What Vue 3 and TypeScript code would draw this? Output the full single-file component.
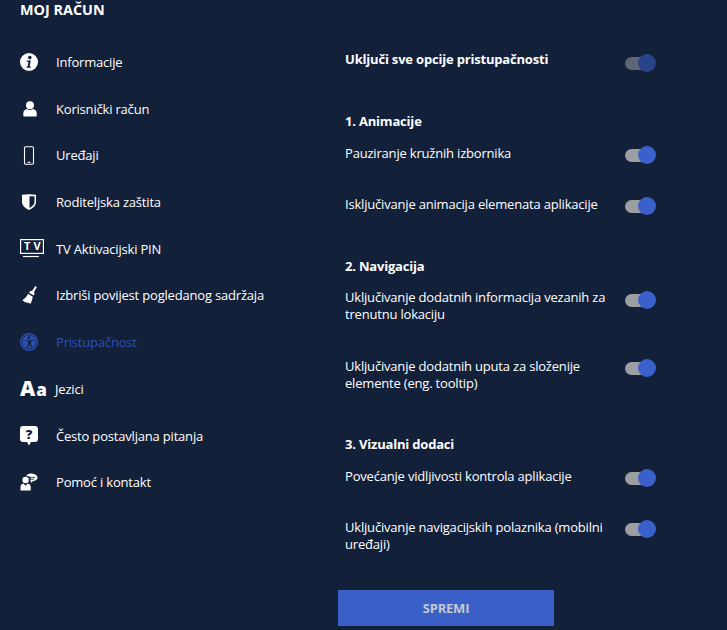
<script setup lang="ts">
interface MenuItem { label: string; icon: string; active?: boolean }
const menu: MenuItem[] = [
  { label: 'Informacije', icon: 'info' },
  { label: 'Korisnički račun', icon: 'user' },
  { label: 'Uređaji', icon: 'phone' },
  { label: 'Roditeljska zaštita', icon: 'shield' },
  { label: 'TV Aktivacijski PIN', icon: 'tv' },
  { label: 'Izbriši povijest pogledanog sadržaja', icon: 'broom' },
  { label: 'Pristupačnost', icon: 'access', active: true },
  { label: 'Jezici', icon: 'lang' },
  { label: 'Često postavljana pitanja', icon: 'faq' },
  { label: 'Pomoć i kontakt', icon: 'help' },
]
interface Section { title: string; items: string[] }
const sections: Section[] = [
  { title: '1. Animacije', items: ['Pauziranje kružnih izbornika', 'Isključivanje animacija elemenata aplikacije'] },
  { title: '2. Navigacija', items: ['Uključivanje dodatnih informacija vezanih za trenutnu lokaciju', 'Uključivanje dodatnih uputa za složenije elemente (eng. tooltip)'] },
  { title: '3. Vizualni dodaci', items: ['Povećanje vidljivosti kontrola aplikacije', 'Uključivanje navigacijskih polaznika (mobilni uređaji)'] },
]
</script>

<template>
  <div class="page">
    <h1 class="title">MOJ RAČUN</h1>
    <div class="columns">
      <nav class="menu">
        <div v-for="m in menu" :key="m.label" class="menu-item" :class="{ active: m.active }">
          <span class="icon">
            <svg v-if="m.icon === 'info'" width="18" height="18" viewBox="0 0 18 18">
              <circle cx="9" cy="9" r="9" fill="#fff" />
              <circle cx="9.800" cy="4.600" r="1.800" fill="#12203a" />
              <path d="M6.800 7.500h4l-1.200 6h1.200v1.200H6.600v-1.200h1l.9-4.800H6.800z" fill="#12203a" />
            </svg>
            <svg v-else-if="m.icon === 'user'" class="ml3" width="14" height="16" viewBox="0 0 14 16">
              <circle cx="7" cy="4.200" r="4" fill="#fff" />
              <path d="M1.300 15.500c-.7 0-1-.4-1-1v-2.300c0-2.500 2-3.700 3.600-4.200 1 .8 2 1.100 3.100 1.100s2.100-.3 3.100-1.100c1.600.5 3.600 1.700 3.600 4.200v2.300c0 .6-.3 1-1 1z" fill="#fff" />
            </svg>
            <svg v-else-if="m.icon === 'phone'" class="ml3" width="12" height="19" viewBox="0 0 12 19">
              <rect x="1.500" y=".7" width="9" height="17.600" rx="1.200" fill="none" stroke="#fff" stroke-width="1.100" />
              <path d="M4.500 16.300h3" stroke="#fff" stroke-width="1.100" />
            </svg>
            <svg v-else-if="m.icon === 'shield'" class="ml2" width="14" height="16" viewBox="0 0 14 16">
              <path d="M0 .8C4 0 10 0 14 .8V8c0 3.500-3 6.200-7 8C3 14.200 0 11.500 0 8z" fill="#fff" />
              <path d="M7.500 2.200h5v5.900c0 2.600-2.300 4.400-5 5.900z" fill="#12203a" />
            </svg>
            <svg v-else-if="m.icon === 'tv'" width="24" height="19" viewBox="0 0 24 19">
              <rect x=".6" y=".6" width="22.800" height="13.800" fill="none" stroke="#fff" stroke-width="1.200" />
              <text x="7" y="11.300" class="tv-text" text-anchor="middle">T</text>
              <text x="17" y="11.300" class="tv-text" text-anchor="middle">V</text>
              <path d="M3 17.500h16" stroke="#fff" stroke-width="1.200" />
            </svg>
            <svg v-else-if="m.icon === 'broom'" class="ml2" width="15" height="18" viewBox="0 0 15 18">
              <path d="M13.400 0l1.400 1-3 5.400 1 .9-1.100 2.300-4.700-2.800 1.500-2 1.500.3z" fill="#fff" />
              <path d="M6 7.800l4.800 3c-.4 2.500-1.100 4.700-2 6.700H7.300l-.8-.9-1 .5-1.700-1-.4.4-3-2.300C3 12.500 5.300 10 6 7.800z" fill="#fff" />
            </svg>
            <svg v-else-if="m.icon === 'access'" width="18" height="18" viewBox="0 0 18 18">
              <circle cx="9" cy="9" r="9" fill="#2c4fb4" />
              <circle cx="9" cy="9" r="7.200" fill="none" stroke="#12203a" stroke-width=".8" />
              <circle cx="9" cy="4.800" r="1.400" fill="#12203a" />
              <path d="M4.500 6.700l3 .7h3l3-.7.3 1-2.900.8v2.300l1.100 3.600-1 .3-1.300-3.500h-.4l-1.300 3.500-1-.3 1.100-3.600V8.500l-2.900-.8z" fill="#12203a" />
            </svg>
            <span v-else-if="m.icon === 'lang'" class="lang"><b class="big">A</b><b class="small">a</b></span>
            <svg v-else-if="m.icon === 'faq'" width="18" height="20" viewBox="0 0 18 20">
              <path d="M3 0h12a3 3 0 0 1 3 3v10a3 3 0 0 1-3 3h-4l-2 3.500L7 16H3a3 3 0 0 1-3-3V3a3 3 0 0 1 3-3z" fill="#fff" />
              <text x="9" y="13" class="faq-text" text-anchor="middle">?</text>
            </svg>
            <svg v-else width="18" height="18" viewBox="0 0 18 18">
              <path d="M10.500.5c3.800 0 7 1.600 7 4 0 2-2 3.400-4.600 3.800l-2.200 1.700.4-1.600h-.8c.5-1 .6-3.300-.7-4.600C9 3 7.700 2.700 6 3c1-1.500 2.600-2.500 4.500-2.500z" fill="#fff" />
              <circle cx="5.600" cy="7" r="3.200" fill="#fff" />
              <path d="M.5 17.500v-3.600c0-1.900 1.200-3 3-3.300l2.100 2.200 2.100-2.200c1.800.3 3 1.400 3 3.300v3.600z" fill="#fff" />
              <path d="M9 4.400h6M10 6.200h4" stroke="#12203a" stroke-width=".8" />
            </svg>
          </span>
          <span class="label" :class="{ shift: m.icon === 'lang' }">{{ m.label }}</span>
        </div>
      </nav>

      <main class="options">
        <div class="opt master">
          <span class="opt-text strong">Uključi sve opcije pristupačnosti</span>
          <span class="toggle dim"><i></i></span>
        </div>
        <section v-for="s in sections" :key="s.title" class="section">
          <h2 class="section-title">{{ s.title }}</h2>
          <div v-for="o in s.items" :key="o" class="opt">
            <span class="opt-text">{{ o }}</span>
            <span class="toggle"><i></i></span>
          </div>
        </section>
        <button class="save" type="button">SPREMI</button>
      </main>
    </div>
  </div>
</template>

<style>
html, body { margin: 0; background: #12203a; }
</style>

<style scoped>
.page {
  width: 727px;
  height: 630px;
  overflow: hidden;
  background: #12203a;
  color: #fff;
  font-family: "Open Sans", "Noto Sans", sans-serif;
  box-sizing: border-box;
  padding: 0 20px;
}
.title {
  margin: 0;
  font-size: 14.4px;
  line-height: 20px;
  font-weight: 700;
}
.columns {
  display: flex;
  margin-top: 19px;
}
.menu {
  width: 325px;
  flex: none;
  margin-top: -0.3px;
}
.menu-item {
  display: flex;
  align-items: center;
  height: 46.7px;
  font-size: 13px;
  letter-spacing: -0.19px;
}
.icon {
  width: 36px;
  flex: none;
  display: flex;
  align-items: center;
}
.icon svg { display: block; }
.ml2 { margin-left: 2px; }
.ml3 { margin-left: 3px; }
.label.shift { margin-left: -1px; }
.active { color: #2c4fb4; }
.tv-text {
  font-family: "Open Sans", sans-serif;
  font-size: 11px;
  font-weight: 700;
  fill: #fff;
}
.faq-text {
  font-family: "Open Sans", sans-serif;
  font-size: 13px;
  font-weight: 800;
  fill: #12203a;
}
.lang {
  display: flex;
  align-items: baseline;
  font-family: "Open Sans", sans-serif;
  line-height: 1;
  letter-spacing: 0;
}
.big { font-size: 21px; font-weight: 800; }
.small { font-size: 17px; font-weight: 800; margin-left: 1px; }
.options {
  width: 311px;
  margin-top: -1px;
}
.opt {
  position: relative;
  font-size: 13px;
  line-height: 17px;
  padding-right: 42px;
  letter-spacing: -0.19px;
}
.master { padding-top: 13px; }
.master .toggle { top: 16px; }
.strong { font-weight: 700; }
.section { margin-top: 45px; }
.section:last-of-type { margin-top: 44px; }
.section-title {
  margin: 0 0 15px;
  font-size: 13px;
  line-height: 17px;
  font-weight: 700;
  letter-spacing: -0.19px;
}
.section:nth-of-type(2) .section-title { margin-bottom: 14px; }
.section:nth-of-type(2) .section-title + .opt .toggle { top: 2px; }
.section .opt + .opt { margin-top: 34px; }
.section:nth-of-type(2) .opt + .opt { margin-top: 35px; }
.toggle {
  position: absolute;
  right: 0;
  top: 1px;
  width: 31px;
  height: 18px;
  display: block;
}
.toggle::before {
  content: "";
  position: absolute;
  left: 0;
  top: 2.5px;
  width: 24px;
  height: 13px;
  border-radius: 6.5px;
  background: #9c9ea2;
}
.toggle i {
  position: absolute;
  right: 0;
  top: 0;
  width: 18px;
  height: 18px;
  border-radius: 50%;
  background: #3a60cb;
}
.dim { opacity: 0.55; }
.save {
  display: block;
  width: 216px;
  height: 36px;
  margin: 37px 0 0 -7px;
  border: 0;
  border-radius: 1px;
  background: #3a60c8;
  color: #c3c8d4;
  font-family: inherit;
  font-size: 13px;
  font-weight: 700;
  letter-spacing: -0.19px;
}
</style>
